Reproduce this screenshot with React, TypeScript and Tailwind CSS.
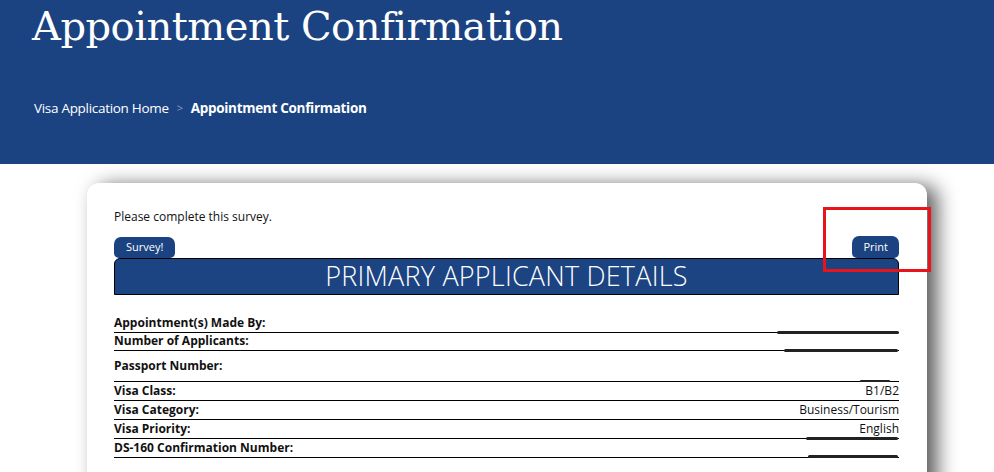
import React from "react";

const rows: { label: string; value?: string; h: string }[] = [
  { label: "Appointment(s) Made By:", h: "h-[19px] items-end" },
  { label: "Number of Applicants:", h: "h-[18px] items-end" },
  { label: "Passport Number:", h: "h-[31px] items-center" },
  { label: "Visa Class:", value: "B1/B2", h: "h-[19px] items-end" },
  { label: "Visa Category:", value: "Business/Tourism", h: "h-[19px] items-end" },
  { label: "Visa Priority:", value: "English", h: "h-[19px] items-end" },
  { label: "DS-160 Confirmation Number:", h: "h-[19px] items-end" },
];

// redaction marks drawn over the right end of some rows
const marks = [
  { top: 331, left: 777, width: 122, thick: 3 },
  { top: 349, left: 784, width: 114, thick: 3 },
  { top: 380, left: 860, width: 30, thick: 2 },
  { top: 437, left: 806, width: 92, thick: 3 },
  { top: 455, left: 808, width: 90, thick: 3 },
];

export default function App() {
  return (
    <div className="relative h-[472px] w-[994px] overflow-hidden bg-white">
      <header className="flex h-[164px] flex-col bg-[#1b4381] px-[32px]">
        <h1
          className="mt-[-2px] text-[40px] leading-[56px] tracking-[-0.5px] text-white"
          style={{ fontFamily: '"DejaVu Serif", "Liberation Serif", serif' }}
        >
          Appointment Confirmation
        </h1>
        <nav
          className="mt-[44px] flex items-center pl-[2px] text-[13.5px] text-white"
          style={{ fontFamily: '"Open Sans", "Liberation Sans", sans-serif', letterSpacing: "-0.3px" }}
        >
          <span>Visa Application Home</span>
          <span className="mx-[8px] text-[11px] text-[#8a9bbb]">&gt;</span>
          <span className="font-bold">Appointment Confirmation</span>
        </nav>
      </header>

      <div className="pl-[87px] pr-[67px] pt-[19px]">
        <div
          className="rounded-[12px] bg-white pl-[27px] pr-[28px] pt-[26px] pb-[40px] shadow-[10px_3px_20px_rgba(0,0,0,0.65)]"
          style={{ fontFamily: '"Open Sans", "Noto Sans", sans-serif' }}
        >
          <p className="text-[12px] leading-[16px] text-[#111]">Please complete this survey.</p>
          <div className="mt-[11px] flex items-end justify-between">
            <button className="h-[21px] rounded-t-[7px] rounded-b-[5px] bg-[#1b4381] px-[12px] text-[11px] text-white">
              Survey!
            </button>
            <button className="h-[22px] rounded-t-[7px] rounded-b-[5px] bg-[#1b4381] px-[11px] text-[11px] text-white">
              Print
            </button>
          </div>
          <div className="flex h-[37px] items-center justify-center rounded-t-[6px] border border-black bg-[#1c4482]">
            <span className="text-[27px] font-light tracking-[0.2px] text-white">PRIMARY APPLICANT DETAILS</span>
          </div>

          <div className="mt-[19px] text-[12px] text-[#111]">
            {rows.map((r) => (
              <div key={r.label} className={`flex justify-between border-b border-black pb-[1px] ${r.h}`}>
                <span className="font-bold leading-[16px]">{r.label}</span>
                {r.value ? <span className="leading-[16px]">{r.value}</span> : null}
              </div>
            ))}
          </div>
        </div>
      </div>

      {marks.map((m, i) => (
        <div
          key={i}
          className="absolute rounded-full bg-[#222]"
          style={{ top: m.top, left: m.left, width: m.width, height: m.thick }}
        />
      ))}

      <div className="absolute left-[823px] top-[207px] h-[65px] w-[108px] border-[3px] border-[#e8141a]" />
    </div>
  );
}
